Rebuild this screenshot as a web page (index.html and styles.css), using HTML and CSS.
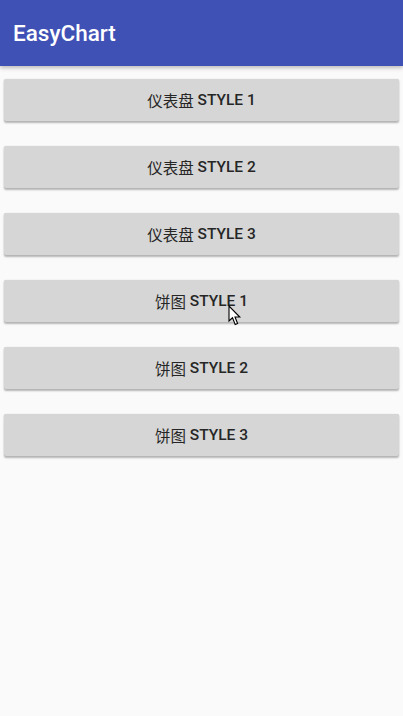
FILE: index.html
```html
<!DOCTYPE html>
<html>
<head>
<meta charset="utf-8">
<link rel="stylesheet" href="styles.css">
</head>
<body>
<header class="appbar"><span class="title">EasyChart</span></header>
<main class="list">
  <button class="btn"><span class="cjk">仪表盘</span> STYLE 1</button>
  <button class="btn"><span class="cjk">仪表盘</span> STYLE 2</button>
  <button class="btn"><span class="cjk">仪表盘</span> STYLE 3</button>
  <button class="btn"><span class="cjk">饼图</span> STYLE 1</button>
  <button class="btn"><span class="cjk">饼图</span> STYLE 2</button>
  <button class="btn"><span class="cjk">饼图</span> STYLE 3</button>
</main>
<svg class="cursor" width="14" height="22" viewBox="0 0 14 22">
  <path d="M1 1 L1 16 L4.5 12.8 L7.2 19.5 L9.6 18.5 L7 12 L11.8 12 Z" fill="#fff" stroke="#000" stroke-width="1.1" stroke-linejoin="miter"/>
</svg>
</body>
</html>
```
FILE: styles.css
```css
html, body {
  margin: 0;
  padding: 0;
  background: #fafafa;
  width: 403px;
  height: 716px;
  overflow: hidden;
  position: relative;
  font-family: Roboto, "Noto Sans CJK SC", sans-serif;
}
.appbar {
  height: 66px;
  background: #3f51b5;
  display: flex;
  align-items: center;
  padding-left: 13px;
  box-shadow: 0 2px 4px rgba(0,0,0,0.25);
  position: relative;
  z-index: 1;
}
.title {
  color: #fff;
  font-size: 22.5px;
  font-weight: 500;
  margin-top: -1px;
}
.list {
  display: flex;
  flex-direction: column;
  gap: 25px;
  padding: 13px 4px 0 4px;
}
.btn {
  height: 42px;
  border: none;
  border-radius: 2px;
  background: #d6d6d6;
  box-shadow: 0 1.5px 2px rgba(0,0,0,0.28), 0 0 1px rgba(0,0,0,0.12);
  font-family: Roboto, "Noto Sans CJK SC", sans-serif;
  font-size: 15.5px;
  font-weight: 500;
  color: #262626;
  padding: 0;
  margin: 0;
  display: flex;
  align-items: center;
  justify-content: center;
  white-space: pre;
}
.cjk {
  font-family: "Noto Sans CJK SC", sans-serif;
  font-weight: 400;
}
.cursor {
  position: absolute;
  left: 228px;
  top: 305px;
}
```
